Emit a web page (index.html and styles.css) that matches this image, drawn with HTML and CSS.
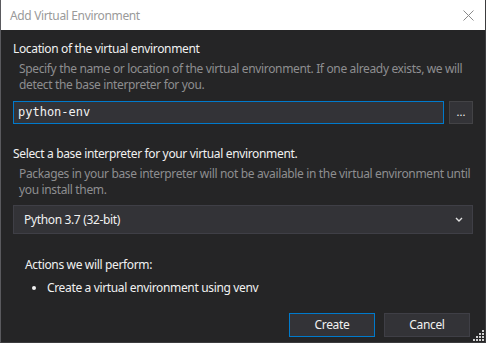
FILE: index.html
```html
<!DOCTYPE html>
<html lang="en">
<head>
    <meta charset="UTF-8">
    <link rel="stylesheet" href="styles.css">
</head>
<body>
    <div class="win">
        <div class="titlebar">
            <span class="title">Add Virtual Environment</span>
            <svg class="close" width="11" height="11" viewBox="0 0 11 11">
                <path d="M0.5 0.5 L10.5 10.5 M10.5 0.5 L0.5 10.5" stroke="#8a8a8a" stroke-width="1" fill="none"/>
            </svg>
        </div>
        <div class="content">
            <div class="label">Location of the virtual environment</div>
            <div class="hint">Specify the name or location of the virtual environment. If one already exists, we will detect the base interpreter for you.</div>
            <div class="pathrow">
                <div class="input">python-env</div>
                <div class="browse">...</div>
            </div>

            <div class="label second">Select a base interpreter for your virtual environment.</div>
            <div class="hint">Packages in your base interpreter will not be available in the virtual environment until you install them.</div>
            <div class="select">
                <span>Python 3.7 (32-bit)</span>
                <svg width="8" height="5" viewBox="0 0 8 5">
                    <path d="M1 1 L4 4 L7 1" stroke="#e0e0e0" stroke-width="1.4" fill="none"/>
                </svg>
            </div>

            <div class="actions">
                <div>Actions we will perform:</div>
                <ul>
                    <li>Create a virtual environment using venv</li>
                </ul>
            </div>

            <div class="buttons">
                <div class="btn primary">Create</div>
                <div class="btn">Cancel</div>
            </div>
        </div>
        <div class="grip">
            <i></i><i></i><i></i><i></i><i></i><i></i><i></i><i></i><i></i><i></i>
        </div>
    </div>
</body>
</html>
```

FILE: styles.css
```css
html, body {
    margin: 0;
    padding: 0;
    background: #252526;
}
.win {
    width: 484px;
    height: 342px;
    border-left: 1px solid #5a5a5e;
    border-right: 1px solid #3c3c3e;
    border-bottom: 1px solid #3c3c3e;
    background: #252526;
    font-family: "Noto Sans", "Open Sans", sans-serif;
    font-size: 12px;
    letter-spacing: -0.35px;
    color: #f1f1f1;
    display: flex;
    flex-direction: column;
    position: relative;
}
.titlebar {
    height: 30px;
    background: #ffffff;
    display: flex;
    align-items: center;
    justify-content: space-between;
    padding: 0 11px 0 9px;
    flex-shrink: 0;
}
.title {
    color: #9a9a9a;
    font-size: 12px;
}
.content {
    padding: 11px 12px 0 12px;
    display: flex;
    flex-direction: column;
}
.label {
    line-height: 16px;
}
.label.second {
    margin-top: 22px;
}
.hint {
    color: #8e8e90;
    padding-left: 6px;
    line-height: 16px;
    margin-top: 4px;
}
.pathrow {
    display: flex;
    gap: 5px;
    margin-top: 8px;
    height: 23px;
}
.input {
    flex: 1;
    background: #333337;
    border: 1px solid #007acc;
    font-family: "DejaVu Sans Mono", monospace;
    font-size: 12px;
    letter-spacing: 0;
    line-height: 21px;
    padding-left: 4px;
}
.browse {
    width: 22px;
    background: #333337;
    border: 1px solid #434346;
    text-align: center;
    line-height: 20px;
    font-size: 11px;
    letter-spacing: 0;
}
.select {
    margin-top: 7px;
    height: 27px;
    background: #333337;
    border: 1px solid #3f3f46;
    display: flex;
    align-items: center;
    justify-content: space-between;
    padding: 0 9px 0 10px;
}
.actions {
    padding: 23px 0 0 12px;
    line-height: 16px;
}
.actions ul {
    margin: 7px 0 0 0;
    padding-left: 22px;
}
.buttons {
    display: flex;
    justify-content: flex-end;
    gap: 9px;
    margin-top: 17px;
    padding-right: 3px;
}
.btn {
    width: 84px;
    height: 22px;
    line-height: 22px;
    text-align: center;
    background: #333337;
    border: 1px solid #3f3f46;
}
.btn.primary {
    border-color: #007acc;
}
.grip {
    position: absolute;
    right: 1px;
    bottom: 1px;
    width: 11px;
    height: 11px;
}
.grip i {
    position: absolute;
    width: 2px;
    height: 2px;
    background: #d0d0d0;
}
.grip i:nth-child(1) { right: 0; bottom: 9px; }
.grip i:nth-child(2) { right: 0; bottom: 6px; }
.grip i:nth-child(3) { right: 3px; bottom: 6px; }
.grip i:nth-child(4) { right: 0; bottom: 3px; }
.grip i:nth-child(5) { right: 3px; bottom: 3px; }
.grip i:nth-child(6) { right: 6px; bottom: 3px; }
.grip i:nth-child(7) { right: 0; bottom: 0; }
.grip i:nth-child(8) { right: 3px; bottom: 0; }
.grip i:nth-child(9) { right: 6px; bottom: 0; }
.grip i:nth-child(10) { right: 9px; bottom: 0; }
```
